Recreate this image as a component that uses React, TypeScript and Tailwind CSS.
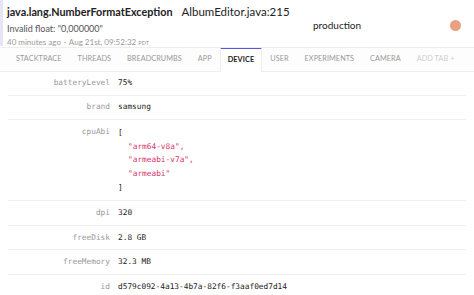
import React from "react";

const rows: { k: string; v: React.ReactNode }[] = [
  { k: "batteryLevel", v: "75%" },
  { k: "brand", v: "samsung" },
  {
    k: "cpuAbi",
    v: (
      <div className="flex flex-col leading-[13.75px]">
        <span>[</span>
        <span className="pl-[10px] text-[#d6336c]">"arm64-v8a",</span>
        <span className="pl-[10px] text-[#d6336c]">"armeabi-v7a",</span>
        <span className="pl-[10px] text-[#d6336c]">"armeabi"</span>
        <span>]</span>
      </div>
    ),
  },
  { k: "dpi", v: "320" },
  { k: "freeDisk", v: "2.8 GB" },
  { k: "freeMemory", v: "32.3 MB" },
  { k: "id", v: "d579c092-4a13-4b7a-82f6-f3aaf0ed7d14" },
];

const tabs = ["STACKTRACE", "THREADS", "BREADCRUMBS", "APP", "DEVICE", "USER", "EXPERIMENTS", "CAMERA"];

export default function App() {
  return (
    <div className="w-[474px] h-[295px] overflow-hidden bg-white" style={{ fontFamily: "Lato, 'Open Sans', sans-serif" }}>
      <div className="relative h-[48px] border-b border-[#eeeeee] pl-[7px] pt-[2px]">
        <div className="absolute left-0 top-0 h-[46px] w-[3px] bg-[#e8e4f7]" />
        <div className="whitespace-nowrap leading-[16px] text-[#222]">
          <span className="text-[10.8px] font-bold">java.lang.NumberFormatException</span>
          <span className="ml-[9px] text-[11.5px]">AlbumEditor.java:215</span>
        </div>
        <div className="mt-[2px] text-[9px] leading-[13px] text-[#555]">Invalid float: "0,000000"</div>
        <div className="mt-[1px] whitespace-nowrap text-[8px] leading-[12px] text-[#999]">
          40 minutes ago <span className="mx-[1px]">·</span> Aug 21st, 09:52:32{" "}
          <span className="text-[5.5px] tracking-wide">PDT</span>
        </div>
        <div className="absolute left-[313px] top-[19px] text-[10px] leading-[12px] text-[#222]">production</div>
        <div className="absolute left-[450px] top-[20px] h-[11px] w-[11px] rounded-full bg-[#e9a080]" />
      </div>
      <div className="flex h-[24px] items-stretch whitespace-nowrap border-b border-[#eeeeee] bg-[#fdfdfd] pl-[8px]">
        {tabs.map((t) =>
          t === "DEVICE" ? (
            <div
              key={t}
              className="-mb-px -mt-px flex items-center border-x border-t-2 border-x-[#eeeeee] border-t-[#5b57d1] bg-white px-[7px] text-[7.3px] font-bold tracking-[0.1px] text-[#222]"
            >
              {t}
            </div>
          ) : (
            <div key={t} className="flex items-center px-[8px] text-[7.3px] tracking-[0.05px] text-[#9a9a9a]">
              {t}
            </div>
          )
        )}
        <div className="flex items-center px-[8px] text-[7.3px] tracking-[0.05px] text-[#cfcfcf]">ADD TAB +</div>
      </div>
      <div className="-mt-[1px] px-[8px]" style={{ fontFamily: "'DejaVu Sans Mono', 'Liberation Mono', monospace" }}>
        {rows.map((r, i) => (
          <div
            key={r.k}
            className={`flex py-[5.75px] text-[7.8px] leading-[12px] ${i < rows.length - 1 ? "border-b border-[#f0f0f0]" : ""}`}
          >
            <div className="w-[110px] shrink-0 pr-[8px] text-right text-[#999]">{r.k}</div>
            <div className="text-[#222]">{r.v}</div>
          </div>
        ))}
      </div>
    </div>
  );
}
